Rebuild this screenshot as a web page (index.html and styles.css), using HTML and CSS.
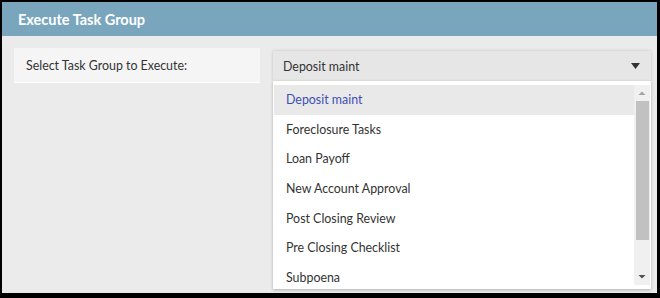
FILE: index.html
```html
<!DOCTYPE html>
<html lang="en">
<head>
    <meta charset="UTF-8">
    <title>Execute Task Group</title>
    <link rel="stylesheet" href="styles.css">
</head>
<body>

<div class="dialog">
    <div class="dialog-title">Execute Task Group</div>
    <div class="dialog-body">
        <div class="field-row">
            <div class="field-label">Select Task Group to Execute:</div>
            <div class="select-wrap">
                <div class="select-box">
                    <span class="select-value">Deposit maint</span>
                    <svg class="select-arrow" width="9" height="6" viewBox="0 0 9 6"><path d="M0 0 H9 L4.5 6 Z" fill="#333"/></svg>
                </div>
                <div class="dropdown">
                    <ul class="options">
                        <li class="option active">Deposit maint</li>
                        <li class="option">Foreclosure Tasks</li>
                        <li class="option">Loan Payoff</li>
                        <li class="option">New Account Approval</li>
                        <li class="option">Post Closing Review</li>
                        <li class="option">Pre Closing Checklist</li>
                        <li class="option">Subpoena</li>
                    </ul>
                    <div class="scrollbar">
                        <svg class="scroll-btn" width="16" height="16" viewBox="0 0 16 16"><path d="M4.5 10 H11.5 L8 6.5 Z" fill="#a3a3a3"/></svg>
                        <div class="scroll-track">
                            <div class="scroll-thumb"></div>
                        </div>
                        <svg class="scroll-btn" width="16" height="16" viewBox="0 0 16 16"><path d="M4.5 6 H11.5 L8 9.5 Z" fill="#505050"/></svg>
                    </div>
                </div>
            </div>
        </div>
    </div>
</div>

</body>
</html>
```

FILE: styles.css
```css
body {
    margin: 0;
    padding: 2px 3px 5px 2px;
    background: #000;
    font-family: 'Lato', 'Open Sans', sans-serif;
    font-size: 12.4px;
    color: #333;
}
.dialog {
    height: 291px;
    background: #ebebeb;
    display: flex;
    flex-direction: column;
}
.dialog-title {
    height: 34px;
    line-height: 36px;
    padding-left: 16px;
    background: #79a6bd;
    color: #fff;
    font-weight: bold;
    font-size: 14.5px;
}
.dialog-body {
    flex: 1;
    padding: 12px 6px 0 12px;
}
.field-row {
    display: flex;
    align-items: flex-start;
}
.field-label {
    width: 246px;
    height: 35px;
    line-height: 35px;
    padding-left: 12px;
    background: #f5f5f5;
    border-bottom: 1px solid #fff;
    box-sizing: border-box;
}
.select-wrap {
    position: relative;
    flex: 1;
    margin-left: 13px;
    margin-top: 3px;
}
.select-box {
    height: 30px;
    display: flex;
    align-items: center;
    justify-content: space-between;
    padding: 0 10px 0 10px;
    background: #e6e6e6;
    box-shadow: 0 0 3px rgba(0, 0, 0, 0.18);
}
.select-arrow {
    margin-right: 1px;
}
.dropdown {
    position: absolute;
    top: 30px;
    left: 0;
    right: 0;
    height: 204px;
    padding-top: 4px;
    overflow: hidden;
    background: #fff;
    box-shadow: 0 1px 3px rgba(0, 0, 0, 0.25);
    display: flex;
}
.options {
    list-style: none;
    margin: 0;
    padding: 0 0 0 1px;
    flex: 1;
}
.option {
    height: 29.7px;
    line-height: 30.5px;
    padding-left: 12px;
    color: #333;
}
.option.active {
    background: #e9e9e9;
    color: #3f4fb5;
}
.scrollbar {
    width: 16px;
    margin-right: 1px;
    margin-bottom: 4px;
    background: #f0f0f0;
    display: flex;
    flex-direction: column;
}
.scroll-btn {
    display: block;
    flex: none;
}
.scroll-track {
    flex: 1;
    padding: 0 1px 0 2px;
}
.scroll-thumb {
    height: 139px;
    background: #c1c1c1;
}
```
